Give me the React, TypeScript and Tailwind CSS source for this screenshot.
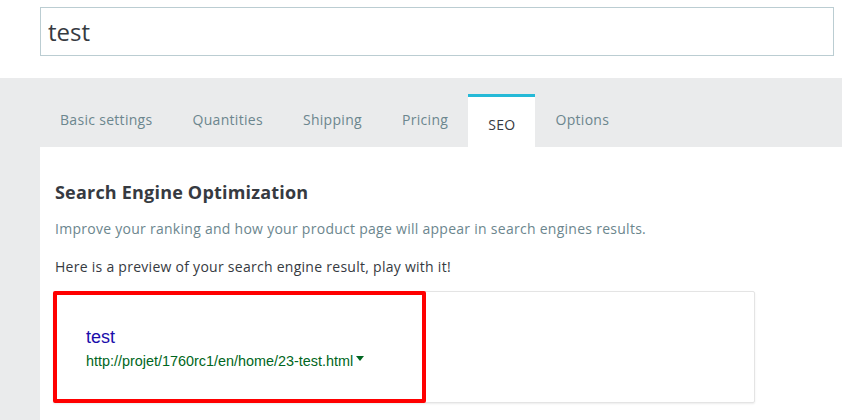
import { useState } from 'react';

const tabs = ['Basic settings', 'Quantities', 'Shipping', 'Pricing', 'SEO', 'Options'];

export default function App() {
	const [name, setName] = useState('test');
	const [active, setActive] = useState('SEO');

	return (
		<div className="w-[842px] h-[420px] overflow-hidden bg-white" style={{ fontFamily: '"Open Sans", sans-serif' }}>
			{/* Product name */}
			<div className="h-[78px] pl-[40px] pr-[8px] pt-[7px]">
				<input
					value={name}
					onChange={(e) => setName(e.target.value)}
					className="w-full h-[49px] border border-[#bbcdd2] px-[7px] text-[24px] text-[#363a41] outline-none"
				/>
			</div>

			<div className="bg-[#eaebec] h-[342px] pt-[16px]">
				{/* Tabs */}
				<div className="flex pl-[40px] h-[53px] tracking-[0.3px]">
					{tabs.map((tab) => (
						<button
							key={tab}
							type="button"
							onClick={() => setActive(tab)}
							className={
								tab === active
									? 'px-[20px] h-full bg-white border-t-[3px] border-[#25b9d7] pt-[4px] text-[14px] text-[#363a41]'
									: 'px-[20px] h-full pb-[2px] text-[14px] text-[#6c868e]'
							}
						>
							{tab}
						</button>
					))}
				</div>

				{/* Panel */}
				<div className="ml-[40px] bg-white h-[300px] pl-[15px] pt-[32px]">
					<h2 className="text-[18px] leading-[26px] font-bold tracking-[0.2px] text-[#363a41]">Search Engine Optimization</h2>
					<p className="mt-[14px] text-[14px] leading-[20px] tracking-[0.27px] text-[#6c868e]">
						Improve your ranking and how your product page will appear in search engines results.
					</p>
					<p className="mt-[18px] text-[14px] leading-[20px] tracking-[0.27px] text-[#363a41]">
						Here is a preview of your search engine result, play with it!
					</p>

					{/* Serp preview */}
					<div className="mt-[14px] -ml-[2px] w-[702px] h-[112px] flex border border-[#e4e4e4] shadow-[0_1px_2px_rgba(0,0,0,0.08)] rounded-[2px]">
						<div
							className="w-[373px] h-[112px] shrink-0 border-[4px] border-[#ff0000] rounded-[2px] -m-px pl-[29px] pt-[31px]"
							style={{ fontFamily: '"Liberation Sans", Arial, sans-serif' }}
						>
							<div className="text-[18px] leading-[22px] text-[#1a0dab]">{name}</div>
							<div className="mt-[5px] flex items-start text-[14.4px] leading-[17px] text-[#006621]">
								http://projet/1760rc1/en/home/23-test.html
								<span className="ml-[3px] mt-[3px] w-0 h-0 border-l-[4px] border-r-[4px] border-t-[5px] border-l-transparent border-r-transparent border-t-[#006621]" />
							</div>
						</div>
					</div>
				</div>
			</div>
		</div>
	);
}
